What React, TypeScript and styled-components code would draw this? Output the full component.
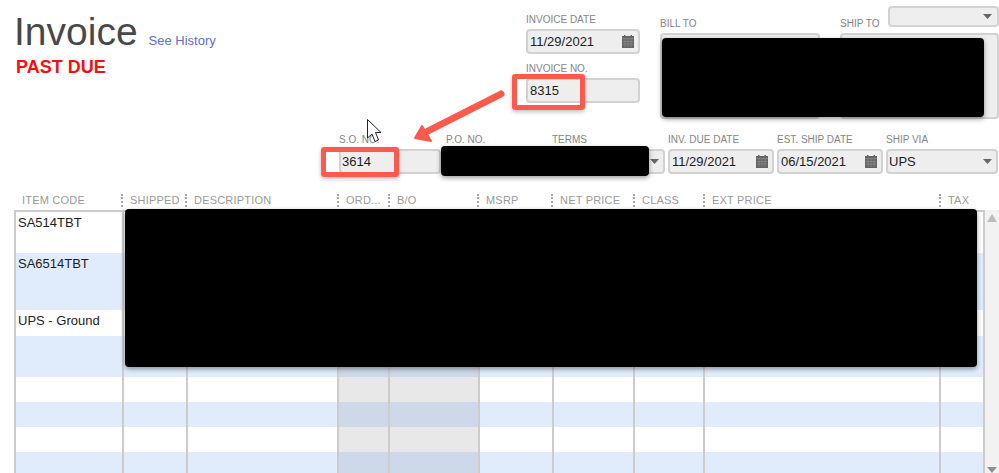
import React from "react";
import styled, { createGlobalStyle } from "styled-components";

const Global = createGlobalStyle`
  html, body { margin: 0; padding: 0; background: #fff; }
  * { box-sizing: border-box; }
`;

const Page = styled.div`
  position: relative;
  width: 999px;
  height: 473px;
  overflow: hidden;
  background: #fff;
  font-family: "Liberation Sans", Arial, sans-serif;
  color: #222;
`;

const TopRow = styled.div`
  display: flex;
  height: 134px;
`;

const TitleBlock = styled.div`
  flex: 0 0 526px;
  padding: 10px 0 0 14px;
`;

const TitleLine = styled.div`
  display: flex;
  align-items: baseline;
  gap: 11px;
`;

const Title = styled.h1`
  margin: 0;
  font-size: 39px;
  line-height: 44px;
  font-weight: 400;
  color: #484848;
`;

const HistoryLink = styled.a`
  font-size: 13px;
  color: #5a6fd2;
`;

const PastDue = styled.div`
  margin: 3px 0 0 2px;
  font-size: 18px;
  line-height: 20px;
  font-weight: 700;
  color: #fb0d0d;
`;

const DateColumn = styled.div`
  flex: 0 0 114px;
  display: flex;
  flex-direction: column;
  padding-top: 14px;
`;

const Stack = styled.div<{ $gap?: number }>`
  display: flex;
  flex-direction: column;
  gap: 3px;
  margin-top: ${(p) => p.$gap ?? 0}px;
`;

const Label = styled.label<{ $inset?: number }>`
  display: block;
  font-size: 10px;
  line-height: 12px;
  color: #858585;
  white-space: nowrap;
  padding-left: ${(p) => p.$inset ?? 0}px;
`;

const Input = styled.div<{ $inset?: number }>`
  display: flex;
  align-items: center;
  justify-content: space-between;
  height: 25px;
  padding: 0 4px 0 ${(p) => p.$inset ?? 2}px;
  background: #eeeeee;
  border: 2px solid #d2d2d2;
  border-radius: 4px;
  font-size: 13px;
  color: #1c1c1c;
`;

const AddressColumn = styled.div<{ $width: number; $gap: number }>`
  flex: 0 0 ${(p) => p.$width}px;
  margin-left: ${(p) => p.$gap}px;
  display: flex;
  flex-direction: column;
`;

const AddressHead = styled.div`
  height: 33px;
  display: flex;
  align-items: flex-end;
  justify-content: space-between;
  padding-bottom: 3px;
`;

const ShipSelect = styled(Input)`
  align-self: flex-start;
  flex: 0 0 111px;
  height: 21px;
  margin: 6px 0 -6px;
  padding-right: 5px;
  justify-content: flex-end;
`;

const AddressBox = styled.div`
  height: 86px;
  background: #eeeeee;
  border: 2px solid #d2d2d2;
  border-radius: 4px;
`;

const FieldRow = styled.div`
  display: flex;
  justify-content: flex-end;
  gap: 3px;
  padding-right: 1px;
`;

const Field = styled(Stack)<{ $width: number }>`
  flex: 0 0 ${(p) => p.$width}px;
`;

const GridHead = styled.div`
  display: grid;
  grid-template-columns: 107px 64px 152px 51px 89px 74px 82px 70px 236px 60px;
  margin: 18px 0 2px 14px;
  height: 16px;
  align-items: center;
`;

const HeadCell = styled.div<{ $first?: boolean }>`
  height: 13px;
  line-height: 13px;
  font-size: 11px;
  letter-spacing: 0.2px;
  color: #9a9a9a;
  white-space: nowrap;
  padding-left: ${(p) => (p.$first ? 8 : 7)}px;
  border-left: ${(p) => (p.$first ? "none" : "2px dotted #a8a8a8")};
`;

const GridBody = styled.div`
  display: flex;
  align-items: flex-start;
  padding-left: 14px;
`;

const Table = styled.div`
  flex: 0 0 971px;
  border-left: 2px solid #cccccc;
  border-top: 2px solid #cccccc;
`;

const Row = styled.div<{ $h: number }>`
  display: grid;
  grid-template-columns: 108px 64px 151px 51px 90px 74px 81px 70px 236px 44px;
  height: ${(p) => p.$h}px;
`;

const Cell = styled.div<{ $blue: boolean; $shaded?: boolean }>`
  padding: 3px 0 0 2px;
  font-size: 13px;
  line-height: 15px;
  color: #1c1c1c;
  border-right: 2px solid #cccccc;
  background: ${(p) =>
    p.$shaded ? (p.$blue ? "#cdd9e8" : "#e8e8e8") : p.$blue ? "#e0ecfc" : "#ffffff"};
`;

const ScrollBar = styled.div`
  flex: 0 0 14px;
  height: 263px;
  display: flex;
  flex-direction: column;
  justify-content: space-between;
  align-items: center;
  background: #f2f2f2;
  padding: 4px 0 0;
`;

const Redaction = styled.div<{ $x: number; $y: number; $w: number; $h: number }>`
  position: absolute;
  left: ${(p) => p.$x}px;
  top: ${(p) => p.$y}px;
  width: ${(p) => p.$w}px;
  height: ${(p) => p.$h}px;
  background: #000;
  border-radius: 4px;
  box-shadow: 0 2px 5px rgba(0, 0, 0, 0.4);
`;

const Callout = styled.div<{ $x: number; $y: number; $w: number; $h: number }>`
  position: absolute;
  left: ${(p) => p.$x}px;
  top: ${(p) => p.$y}px;
  width: ${(p) => p.$w}px;
  height: ${(p) => p.$h}px;
  border: 5px solid #fd5a4e;
  border-radius: 3px;
  box-shadow: 0 2px 4px rgba(0, 0, 0, 0.25);
`;

const SoCover = styled.div`
  position: absolute;
  left: 326px;
  top: 152px;
  width: 13px;
  height: 19px;
  background: #fff;
`;

const Overlay = styled.svg`
  position: absolute;
  left: 0;
  top: 0;
  pointer-events: none;
`;

const Calendar = () => (
  <svg width="12" height="13" viewBox="0 0 12 13">
    <rect x="0" y="1" width="12" height="12" fill="#666" />
    <rect x="2" y="0" width="1.5" height="2" fill="#666" />
    <rect x="8.5" y="0" width="1.5" height="2" fill="#666" />
    <path d="M0 3.5H12M1 6.5H11M1 9H11M3 4V12M6 4V12M9 4V12" stroke="#8c8c8c" strokeWidth="0.7" />
  </svg>
);

const Caret = () => (
  <svg width="9" height="5" viewBox="0 0 9 5">
    <path d="M0 0H9L4.5 5Z" fill="#666" />
  </svg>
);

const heads = ["ITEM CODE", "SHIPPED", "DESCRIPTION", "ORD...", "B/O", "MSRP", "NET PRICE", "CLASS", "EXT PRICE", "TAX"];
const rows: { h: number; blue: boolean; text?: string }[] = [
  { h: 41, blue: false, text: "SA514TBT" },
  { h: 57, blue: true, text: "SA6514TBT" },
  { h: 26, blue: false, text: "UPS - Ground" },
  { h: 41, blue: true },
  { h: 25, blue: false },
  { h: 25, blue: true },
  { h: 25, blue: false },
  { h: 25, blue: true },
];

export default function App() {
  return (
    <Page>
      <Global />
      <TopRow>
        <TitleBlock>
          <TitleLine>
            <Title>Invoice</Title>
            <HistoryLink>See History</HistoryLink>
          </TitleLine>
          <PastDue>PAST DUE</PastDue>
        </TitleBlock>
        <DateColumn>
          <Stack>
            <Label>INVOICE DATE</Label>
            <Input>
              11/29/2021
              <Calendar />
            </Input>
          </Stack>
          <Stack $gap={9}>
            <Label>INVOICE NO.</Label>
            <Input>8315</Input>
          </Stack>
        </DateColumn>
        <AddressColumn $width={160} $gap={20}>
          <AddressHead>
            <Label>BILL TO</Label>
          </AddressHead>
          <AddressBox />
        </AddressColumn>
        <AddressColumn $width={159} $gap={20}>
          <AddressHead>
            <Label>SHIP TO</Label>
            <ShipSelect>
              <Caret />
            </ShipSelect>
          </AddressHead>
          <AddressBox />
        </AddressColumn>
      </TopRow>

      <FieldRow>
        <Field $width={102}>
          <Label>S.O. NO.</Label>
          <Input $inset={1}>3614</Input>
        </Field>
        <Field $width={104}>
          <Label $inset={2}>P.O. NO.</Label>
          <Input />
        </Field>
        <Field $width={114}>
          <Label $inset={1}>TERMS</Label>
          <Input>
            <span />
            <Caret />
          </Input>
        </Field>
        <Field $width={106}>
          <Label>INV. DUE DATE</Label>
          <Input>
            11/29/2021
            <Calendar />
          </Input>
        </Field>
        <Field $width={106}>
          <Label>EST. SHIP DATE</Label>
          <Input>
            06/15/2021
            <Calendar />
          </Input>
        </Field>
        <Field $width={112}>
          <Label>SHIP VIA</Label>
          <Input $inset={1}>
            UPS
            <Caret />
          </Input>
        </Field>
      </FieldRow>

      <GridHead>
        {heads.map((h, i) => (
          <HeadCell key={h} $first={i === 0}>
            {h}
          </HeadCell>
        ))}
      </GridHead>

      <GridBody>
        <Table>
          {rows.map((r, i) => (
            <Row key={i} $h={r.h}>
              {heads.map((h, c) => (
                <Cell key={h} $blue={r.blue} $shaded={c === 3 || c === 4}>
                  {c === 0 ? r.text : null}
                </Cell>
              ))}
            </Row>
          ))}
        </Table>
        <ScrollBar>
          <svg width="10" height="8" viewBox="0 0 10 8">
            <path d="M5 0L10 8H0Z" fill="#bdbdbd" />
          </svg>
          <svg width="10" height="6" viewBox="0 0 10 6">
            <path d="M0 0H10L5 6Z" fill="#8f8f8f" />
          </svg>
        </ScrollBar>
      </GridBody>

      <Redaction $x={662} $y={38} $w={322} $h={79} />
      <Redaction $x={441} $y={146} $w={208} $h={30} />
      <Redaction $x={125} $y={209} $w={852} $h={158} />
      <SoCover />
      <Callout $x={512} $y={74} $w={73} $h={36} />
      <Callout $x={321} $y={147} $w={78} $h={30} />
      <Overlay width={999} height={473} viewBox="0 0 999 473">
        <path d="M501 94L428 131" stroke="#fd5a4e" strokeWidth="7" strokeLinecap="round" />
        <path d="M415 138L422 126L431 141Z" fill="#fd5a4e" stroke="#fd5a4e" strokeWidth="2" strokeLinejoin="round" />
        <path
          d="M367.5 119.5V138L372 134L375 141.5L378.5 140L375.5 132.5L381 132.5Z"
          fill="#fff"
          stroke="#222"
          strokeWidth="1"
          strokeLinejoin="round"
        />
      </Overlay>
    </Page>
  );
}
